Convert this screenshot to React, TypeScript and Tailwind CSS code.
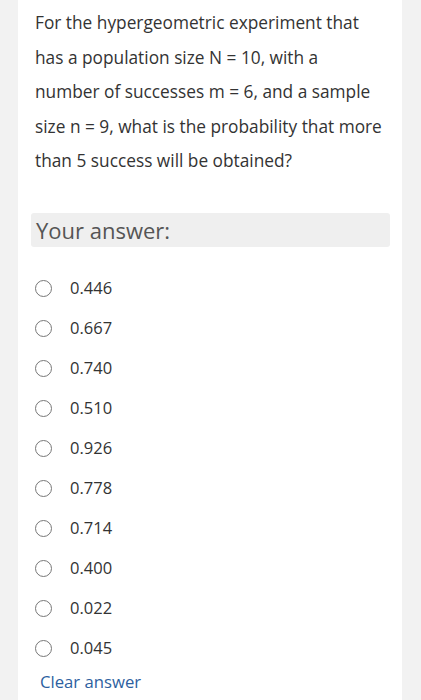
const options = ["0.446", "0.667", "0.740", "0.510", "0.926", "0.778", "0.714", "0.400", "0.022", "0.045"]

export default function App() {
  return (
    <div className="min-h-[700px] bg-[#f2f2f2] pl-[18px] pr-[19px] font-['Open_Sans',sans-serif]">
      <div className="min-h-[700px] bg-white pl-[13px] pr-[12px] pt-[6px]">
        <p className="pl-[4px] pr-[6px] text-[17.3px] leading-[34.5px] text-[#333]">
          For the hypergeometric experiment that has a population size N = 10, with a number of successes m = 6, and a sample size n = 9, what is the probability that more than 5 success will be obtained?
        </p>

        <div className="mt-[34px] h-[34px] rounded-[3px] bg-[#efefef] pl-[5px] text-[22px] leading-[34px] text-[#555]">
          Your answer:
        </div>

        <div className="mt-[22px] flex flex-col">
          {options.map((o) => (
            <label key={o} className="flex h-[40px] items-center">
              <span className="ml-[4px] h-[17px] w-[17px] rounded-full border-[1.5px] border-[#777]" />
              <span className="ml-[18px] text-[16.5px] text-[#333]">{o}</span>
            </label>
          ))}
        </div>

        <div className="pl-[9px] text-[16.7px] text-[#2d5f9f]">Clear answer</div>
      </div>
    </div>
  )
}
